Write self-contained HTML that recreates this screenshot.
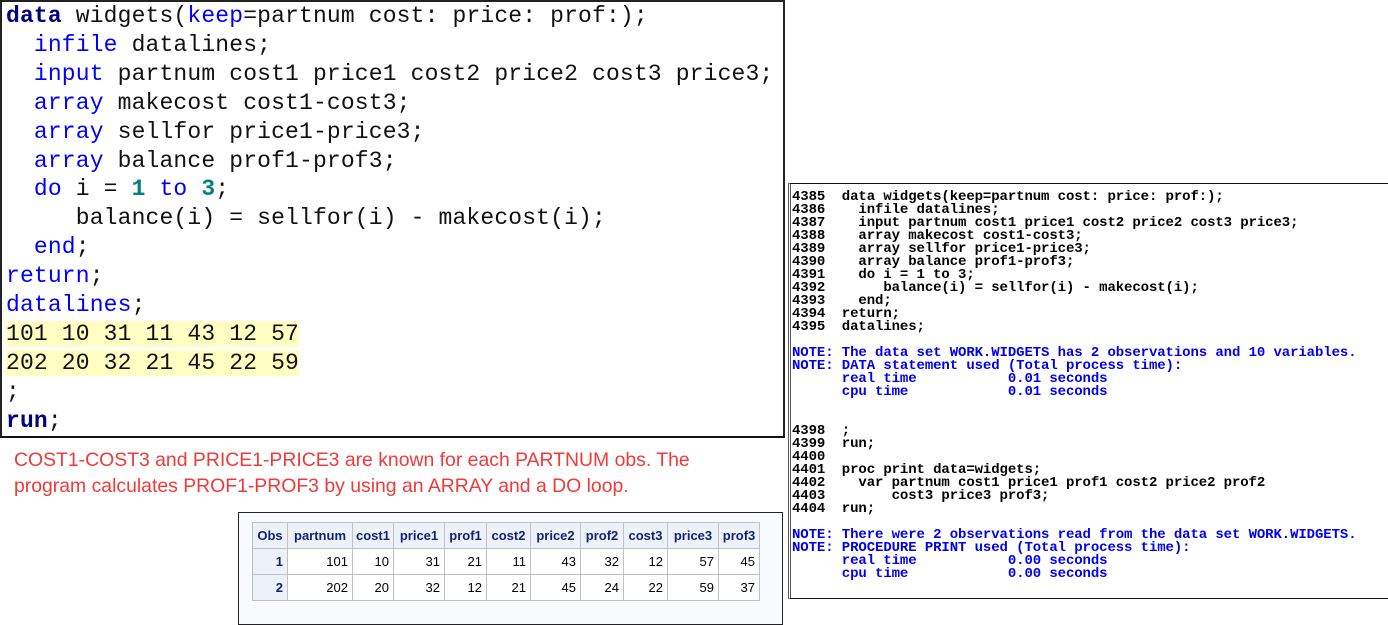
<!DOCTYPE html>
<html><head><meta charset="utf-8"><style>
body{margin:0;width:1388px;height:625px;background:#fff;position:relative;overflow:hidden;font-family:"Liberation Sans",sans-serif}
#code{position:absolute;left:0;top:0;width:781px;height:434px;border:2px solid #222;border-bottom-color:#111;box-sizing:content-box}
#code pre{margin:0;position:absolute;left:4px;top:0px;font:23px/28.9px "Liberation Mono",monospace;letter-spacing:0.15px;color:#111}
.k{color:#0000ff}.b{color:#000080;font-weight:bold}.n{color:#008080;font-weight:bold}
.hl{background:#ffffc4}
#red{position:absolute;left:14px;top:447px;font-size:19.4px;line-height:26px;color:#f03a3a}
#tbox{position:absolute;left:238px;top:512px;width:543px;height:111px;border:1px solid #222;background:#fafbfe}
table{position:absolute;left:13px;top:9px;border-collapse:collapse;table-layout:fixed;width:507px;font-size:13px;font-family:"Liberation Sans",sans-serif}
td,th{border:1px solid #c1c1c1;height:25px;padding:0 4px;text-align:right;overflow:hidden;white-space:nowrap}
th{background:#edf2f9;color:#112277;font-weight:bold;text-align:center;padding:0}
td{background:#fff;color:#000}
td.o{background:#edf2f9;color:#112277;font-weight:bold}
#log{position:absolute;left:788px;top:183px;width:598px;height:414px;border:1px solid #111;border-left:3px double #555}
#log pre{margin:0;position:absolute;left:1px;top:7px;font:bold 14px/13px "Liberation Mono",monospace;letter-spacing:-0.1px;color:#000}
.bl{color:#0000ee}
</style></head><body>
<div id="code"><pre><span class="b">data</span> widgets(<span class="k">keep</span>=partnum cost: price: prof:);
  <span class="k">infile</span> datalines;
  <span class="k">input</span> partnum cost1 price1 cost2 price2 cost3 price3;
  <span class="k">array</span> makecost cost1-cost3;
  <span class="k">array</span> sellfor price1-price3;
  <span class="k">array</span> balance prof1-prof3;
  <span class="k">do</span> i = <span class="n">1</span> <span class="k">to</span> <span class="n">3</span>;
     balance(i) = sellfor(i) - makecost(i);
  <span class="k">end</span>;
<span class="k">return</span>;
<span class="k">datalines</span>;
<span class="hl">101 10 31 11 43 12 57</span>
<span class="hl">202 20 32 21 45 22 59</span>
;
<span class="b">run</span>;</pre></div>
<div id="red">COST1-COST3 and PRICE1-PRICE3 are known for each PARTNUM obs. The<br>program calculates PROF1-PROF3 by using an ARRAY and a DO loop.</div>
<div id="tbox"><table>
<colgroup><col style="width:35px"><col style="width:65px"><col style="width:41px"><col style="width:51px"><col style="width:42px"><col style="width:44px"><col style="width:50px"><col style="width:43px"><col style="width:44px"><col style="width:51px"><col style="width:41px"></colgroup>
<tr><th>Obs</th><th>partnum</th><th>cost1</th><th>price1</th><th>prof1</th><th>cost2</th><th>price2</th><th>prof2</th><th>cost3</th><th>price3</th><th>prof3</th></tr>
<tr><td class="o">1</td><td>101</td><td>10</td><td>31</td><td>21</td><td>11</td><td>43</td><td>32</td><td>12</td><td>57</td><td>45</td></tr>
<tr><td class="o">2</td><td>202</td><td>20</td><td>32</td><td>12</td><td>21</td><td>45</td><td>24</td><td>22</td><td>59</td><td>37</td></tr>
</table></div>
<div id="log"><pre>4385  data widgets(keep=partnum cost: price: prof:);
4386    infile datalines;
4387    input partnum cost1 price1 cost2 price2 cost3 price3;
4388    array makecost cost1-cost3;
4389    array sellfor price1-price3;
4390    array balance prof1-prof3;
4391    do i = 1 to 3;
4392       balance(i) = sellfor(i) - makecost(i);
4393    end;
4394  return;
4395  datalines;

<span class="bl">NOTE: The data set WORK.WIDGETS has 2 observations and 10 variables.
NOTE: DATA statement used (Total process time):
      real time           0.01 seconds
      cpu time            0.01 seconds</span>


4398  ;
4399  run;
4400
4401  proc print data=widgets;
4402    var partnum cost1 price1 prof1 cost2 price2 prof2
4403        cost3 price3 prof3;
4404  run;

<span class="bl">NOTE: There were 2 observations read from the data set WORK.WIDGETS.
NOTE: PROCEDURE PRINT used (Total process time):
      real time           0.00 seconds
      cpu time            0.00 seconds</span></pre></div>
</body></html>
